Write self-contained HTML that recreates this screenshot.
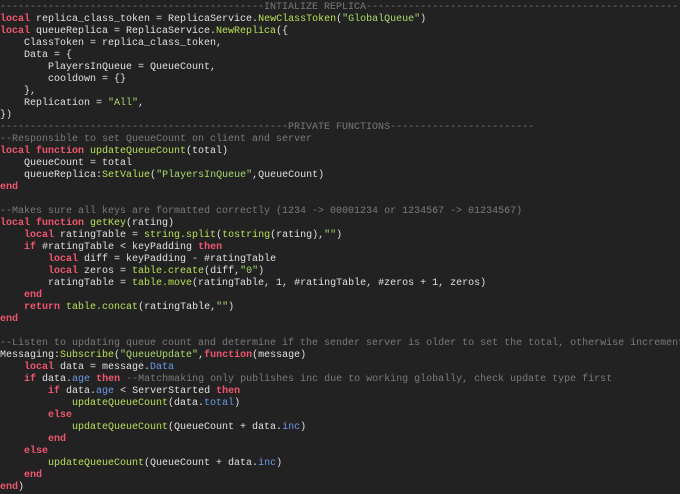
<!DOCTYPE html>
<html><head><meta charset="utf-8"><style>
html,body{margin:0;padding:0;background:#222222;width:680px;height:494px;overflow:hidden}
pre{margin:0;padding:0;font-family:"Liberation Mono",monospace;font-size:10px;line-height:12px;color:#e0e0e0;white-space:pre;position:relative;top:2px;letter-spacing:0px}
.k{color:#f2566f;font-weight:bold}
.f{color:#b6e05a}
.s{color:#a8dc6e}
.c{color:#7a7a7a}
.b{color:#6a9be8}
</style></head><body><pre><span class="c">--------------------------------------------INTIALIZE REPLICA----------------------------------------------------</span>
<span class="k">local</span> replica_class_token = ReplicaService.<span class="f">NewClassToken</span>(<span class="s">"GlobalQueue"</span>)
<span class="k">local</span> queueReplica = ReplicaService.<span class="f">NewReplica</span>({
    ClassToken = replica_class_token,
    Data = {
        PlayersInQueue = QueueCount,
        cooldown = {}
    },
    Replication = <span class="s">"All"</span>,
})
<span class="c">------------------------------------------------PRIVATE FUNCTIONS------------------------</span>
<span class="c">--Responsible to set QueueCount on client and server</span>
<span class="k">local function</span> <span class="f">updateQueueCount</span>(total)
    QueueCount = total
    queueReplica:<span class="f">SetValue</span>(<span class="s">"PlayersInQueue"</span>,QueueCount)
<span class="k">end</span>

<span class="c">--Makes sure all keys are formatted correctly (1234 -&gt; 00001234 or 1234567 -&gt; 01234567)</span>
<span class="k">local function</span> <span class="f">getKey</span>(rating)
    <span class="k">local</span> ratingTable = <span class="f">string.split</span>(<span class="f">tostring</span>(rating),<span class="s">""</span>)
    <span class="k">if</span> #ratingTable &lt; keyPadding <span class="k">then</span>
        <span class="k">local</span> diff = keyPadding - #ratingTable
        <span class="k">local</span> zeros = <span class="f">table.create</span>(diff,<span class="s">"0"</span>)
        ratingTable = <span class="f">table.move</span>(ratingTable, 1, #ratingTable, #zeros + 1, zeros)
    <span class="k">end</span>
    <span class="k">return</span> <span class="f">table.concat</span>(ratingTable,<span class="s">""</span>)
<span class="k">end</span>

<span class="c">--Listen to updating queue count and determine if the sender server is older to set the total, otherwise increment</span>
Messaging:<span class="f">Subscribe</span>(<span class="s">"QueueUpdate"</span>,<span class="k">function</span>(message)
    <span class="k">local</span> data = message.<span class="b">Data</span>
    <span class="k">if</span> data.<span class="b">age</span> <span class="k">then</span> <span class="c">--Matchmaking only publishes inc due to working globally, check update type first</span>
        <span class="k">if</span> data.<span class="b">age</span> &lt; ServerStarted <span class="k">then</span>
            <span class="f">updateQueueCount</span>(data.<span class="b">total</span>)
        <span class="k">else</span>
            <span class="f">updateQueueCount</span>(QueueCount + data.<span class="b">inc</span>)
        <span class="k">end</span>
    <span class="k">else</span>
        <span class="f">updateQueueCount</span>(QueueCount + data.<span class="b">inc</span>)
    <span class="k">end</span>
<span class="k">end</span>)</pre></body></html>
